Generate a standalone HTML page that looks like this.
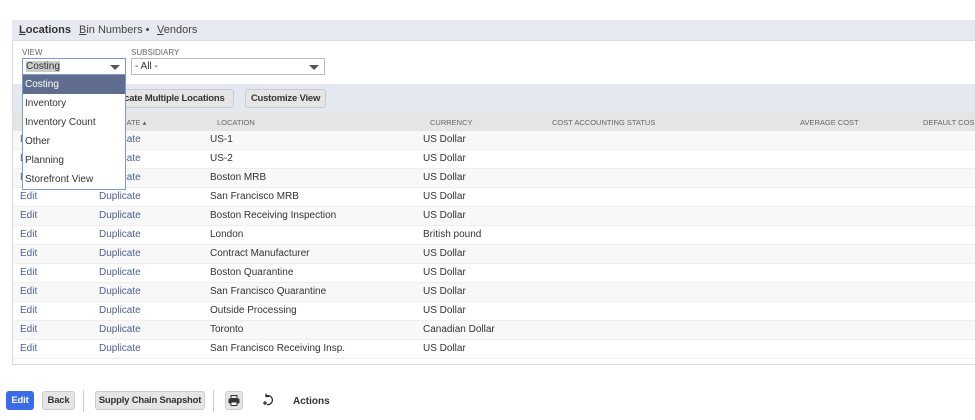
<!DOCTYPE html>
<html><head><style>
body{margin:0;width:975px;height:420px;background:#fff;font-family:"Liberation Sans",sans-serif;font-size:10px;color:#333;position:relative;overflow:hidden}
.a{position:absolute;white-space:nowrap}
.tabs{left:12px;top:20px;width:963px;height:20px;background:#e6e9f0}
.panel{left:12px;top:40px;width:963px;height:325px;border:1px solid #ddd;border-right:none;box-sizing:border-box;background:#fff}
.lbl{font-size:8px;color:#666}
.sel{border:1px solid #bbb;height:17px;box-sizing:border-box;background:#fff;font-size:10px;padding:2px 3px}
.tri{position:absolute;right:5px;top:6px;width:0;height:0;border-left:5px solid transparent;border-right:5px solid transparent;border-top:5px solid #555}
.btn{background:#e5e5e5;border:1px solid #ccc;border-radius:3px;font-weight:bold;font-size:9.5px;letter-spacing:-0.2px;height:19px;line-height:17px;box-sizing:border-box;text-align:center;color:#333;overflow:hidden}
.row{left:13px;width:962px;height:19px}
.row span{position:absolute;top:3px}
.lk{color:#4d5f95}
.hd span{font-size:7.5px;color:#666;top:6px}
</style></head><body>
<div class="a tabs"></div>
<div class="a" style="left:19px;top:24px;font-size:11px;font-weight:bold;color:#333"><u>L</u>ocations</div>
<div class="a" style="left:79px;top:24px;font-size:11px;color:#444"><u>B</u>in Numbers •</div>
<div class="a" style="left:157px;top:24px;font-size:11px;color:#444"><u>V</u>endors</div>
<div class="a panel"></div>
<div class="a lbl" style="left:22px;top:48px">VIEW</div>
<div class="a lbl" style="left:131px;top:48px">SUBSIDIARY</div>
<div class="a sel" style="left:131px;top:58px;width:194px">- All -<div class="tri"></div></div>
<div class="a" style="left:13px;top:84px;width:962px;height:28px;background:#e4e8f0"></div>
<div class="a btn" style="left:92px;top:89px;width:142px">Duplicate Multiple Locations</div>
<div class="a btn" style="left:245px;top:89px;width:81px">Customize View</div>
<div class="a row hd" style="top:112px;background:#e5e5e5"><span style="left:86px">DUPLICATE ▴</span><span style="left:204px">LOCATION</span><span style="left:417px">CURRENCY</span><span style="left:539px">COST ACCOUNTING STATUS</span><span style="left:787px">AVERAGE COST</span><span style="left:910px">DEFAULT COST</span></div>
<div id="rows"></div>
<script>
var d=[["US-1","US Dollar"],["US-2","US Dollar"],["Boston MRB","US Dollar"],["San Francisco MRB","US Dollar"],["Boston Receiving Inspection","US Dollar"],["London","British pound"],["Contract Manufacturer","US Dollar"],["Boston Quarantine","US Dollar"],["San Francisco Quarantine","US Dollar"],["Outside Processing","US Dollar"],["Toronto","Canadian Dollar"],["San Francisco Receiving Insp.","US Dollar"]];
var h="";d.forEach(function(r,i){h+='<div class="a row" style="top:'+(131+i*19)+'px;background:'+(i%2?'#fff':'#f8f8f8')+';border-bottom:1px solid #eee;box-sizing:border-box"><span class="lk" style="left:7px">Edit</span><span class="lk" style="left:86px">Duplicate</span><span style="left:197px">'+r[0]+'</span><span style="left:410px">'+r[1]+'</span></div>'});document.getElementById("rows").innerHTML=h;
</script>
<div class="a sel" style="left:22px;top:58px;width:104px;border-color:#7c9ad0"><span style="background:#ccc">Costing</span><div class="tri"></div></div>
<div class="a" style="left:22px;top:75px;width:104px;height:115px;background:#fff;border:1px solid #7c9ad0;box-sizing:border-box"></div>
<div class="a" style="left:23px;top:75px;width:102px;height:19px;background:#5f6e8f"></div>
<div class="a" style="left:25px;top:79px;color:#fff">Costing</div>
<div class="a" style="left:25px;top:98px">Inventory</div>
<div class="a" style="left:25px;top:117px">Inventory Count</div>
<div class="a" style="left:25px;top:136px">Other</div>
<div class="a" style="left:25px;top:155px">Planning</div>
<div class="a" style="left:25px;top:174px">Storefront View</div>
<div class="a btn" style="left:6px;top:391px;width:28px;background:#3a6be8;border-color:#3a6be8;color:#fff">Edit</div>
<div class="a btn" style="left:42px;top:391px;width:33px">Back</div>
<div class="a" style="left:83px;top:390px;width:1px;height:22px;background:#ccc"></div>
<div class="a btn" style="left:95px;top:391px;width:110px">Supply Chain Snapshot</div>
<div class="a" style="left:213px;top:390px;width:1px;height:22px;background:#ccc"></div>
<div class="a btn" style="left:225px;top:391px;width:18px;padding-top:3px">
<svg width="12" height="11" viewBox="0 0 12 11"><rect x="3" y="0.5" width="6" height="3" fill="none" stroke="#333"/><rect x="0.5" y="3.5" width="11" height="5" rx="1" fill="#333"/><rect x="3" y="7" width="6" height="3.5" fill="#fff" stroke="#333"/></svg></div>
<svg class="a" style="left:262px;top:393px" width="13" height="13" viewBox="0 0 13 13"><path d="M4 3 A4.5 4.5 0 1 1 5 11.5" fill="none" stroke="#222" stroke-width="1.2"/><path d="M4 0.5 V3.5 H7" fill="none" stroke="#222" stroke-width="1.2"/><path d="M1 10 H5 M3 8 V12" stroke="#222" stroke-width="1.2"/></svg>
<div class="a" style="left:293px;top:396px;font-weight:bold">Actions</div>
</body></html>
